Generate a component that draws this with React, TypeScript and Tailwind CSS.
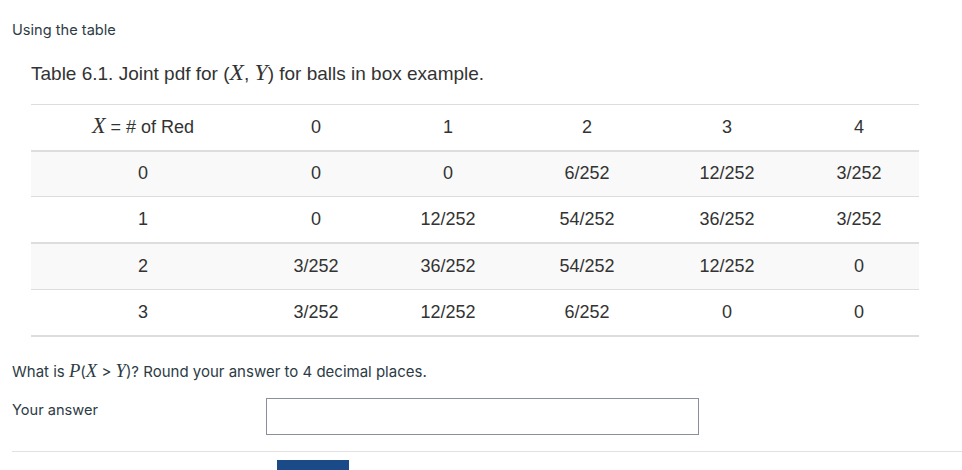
import React from 'react';

const header = ['0', '1', '2', '3', '4'];

const rows: string[][] = [
  ['0', '0', '0', '6/252', '12/252', '3/252'],
  ['1', '0', '12/252', '54/252', '36/252', '3/252'],
  ['2', '3/252', '36/252', '54/252', '12/252', '0'],
  ['3', '3/252', '12/252', '6/252', '0', '0'],
];

const colWidths = ['w-[224px]', 'w-[122px]', 'w-[142px]', 'w-[136px]', 'w-[144px]', 'w-[120px]'];

// MathJax-ish italic variable
const MathVar: React.FC<{ children: React.ReactNode }> = ({ children }) => (
  <span className="italic font-['Liberation_Serif',serif] text-[1.24em] leading-none">{children}</span>
);

const App: React.FC = () => {
  return (
    <div className="w-[962px] h-[470px] overflow-hidden bg-white text-[#2d3b45] font-['Inter',sans-serif]">
      <p className="pl-3 pt-[21px] text-[14.6px] leading-[18px]">Using the table</p>

      <div className="pl-[31px] pt-[22px] w-[919px]">
        <p className="text-[19px] leading-[24px] text-[#333] font-['Liberation_Sans',sans-serif]">
          Table 6.1. Joint pdf for (<MathVar>X</MathVar>, <MathVar>Y</MathVar>) for balls in box example.
        </p>

        <table className="mt-[18px] w-[888px] table-fixed border-collapse text-[18px] text-[#333] font-['Liberation_Sans',sans-serif]">
          <colgroup>
            {colWidths.map((w, i) => (
              <col key={i} className={w} />
            ))}
          </colgroup>
          <thead>
            <tr className="h-[46px] border-t border-[#ddd] border-b-2">
              <th className="font-normal text-center">
                <MathVar>X</MathVar> = # of Red
              </th>
              {header.map((h) => (
                <th key={h} className="font-normal text-center">
                  {h}
                </th>
              ))}
            </tr>
          </thead>
          <tbody>
            {rows.map((r, i) => (
              <tr
                key={i}
                className={`${i === 2 ? 'h-[47px]' : 'h-[46px]'} border-b ${
                  i === 1 || i === 3 ? 'border-b-2' : ''
                } border-[#ddd] ${i % 2 === 0 ? 'bg-[#f9f9f9]' : 'bg-white'}`}
              >
                {r.map((c, j) => (
                  <td key={j} className="text-center">
                    {c}
                  </td>
                ))}
              </tr>
            ))}
          </tbody>
        </table>
      </div>

      <p className="pl-3 pt-[25px] text-[15px] leading-[18px]">
        What is <MathVar>P</MathVar>(<MathVar>X</MathVar> &gt; <MathVar>Y</MathVar>)? Round your answer to 4 decimal places.
      </p>

      <div className="pl-3 pt-[17px] flex items-start">
        <span className="w-[254px] text-[14.6px] leading-[18px] pt-[3px]">Your answer</span>
        <input
          type="text"
          className="w-[433px] h-[37px] border border-[#8b8f97] bg-white outline-none"
        />
      </div>

      <div className="ml-3 mt-[16px] border-t border-[#e1e1e1]" />

      <div className="pl-[277px] pt-[8px]">
        <button className="w-[72px] h-[30px] bg-[#1a4a87] text-white" />
      </div>
    </div>
  );
};

export default App;
